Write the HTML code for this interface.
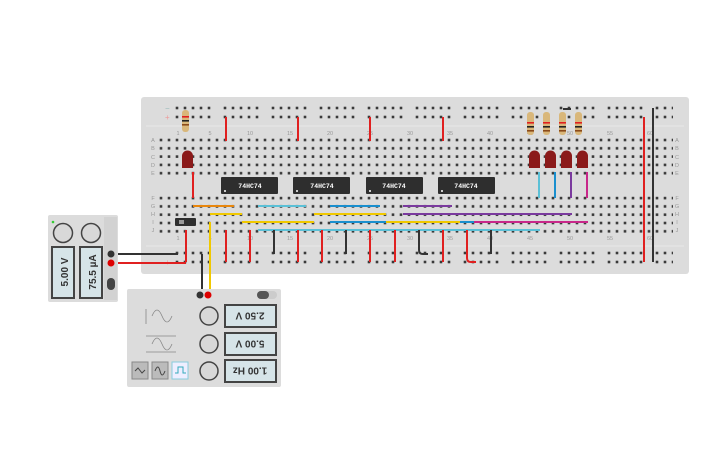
<!DOCTYPE html>
<html><head><meta charset="utf-8"><style>
html,body{margin:0;padding:0;background:#fff;width:725px;height:453px;overflow:hidden}
svg{display:block;font-family:"Liberation Sans",sans-serif}
</style></head><body>
<svg width="725" height="453" viewBox="0 0 725 453" xmlns="http://www.w3.org/2000/svg">
<defs>
<pattern id="hp" x="157" y="136" width="8" height="8.3" patternUnits="userSpaceOnUse"><rect x="2.7" y="2.7" width="2.6" height="2.6" fill="#3a3a3a"/></pattern>
<pattern id="rp" x="173" y="106" width="48" height="9" patternUnits="userSpaceOnUse">
<rect x="2.7" y="0.7" width="2.6" height="2.6" fill="#3a3a3a"/><rect x="10.7" y="0.7" width="2.6" height="2.6" fill="#3a3a3a"/><rect x="18.7" y="0.7" width="2.6" height="2.6" fill="#3a3a3a"/><rect x="26.7" y="0.7" width="2.6" height="2.6" fill="#3a3a3a"/><rect x="34.7" y="0.7" width="2.6" height="2.6" fill="#3a3a3a"/></pattern>
</defs>
<!-- breadboard -->
<rect x="141" y="97" width="548" height="177" rx="3" fill="#dcdcdc"/>
<line x1="146" y1="126" x2="684" y2="126" stroke="#e8e8e8"/>
<line x1="146" y1="246" x2="684" y2="246" stroke="#e8e8e8"/>
<!-- rails -->
<rect x="173" y="106" width="500" height="13" fill="url(#rp)"/>
<g transform="translate(0,145)"><rect x="173" y="106" width="500" height="13" fill="url(#rp)"/></g>
<text x="165" y="111" font-size="8" fill="#9bb">−</text><text x="165" y="120" font-size="8" fill="#e99">+</text>
<text x="165" y="256" font-size="8" fill="#9bb">−</text><text x="165" y="265" font-size="8" fill="#e99">+</text>
<!-- terminal strips -->
<rect x="157" y="136" width="516" height="41.5" fill="url(#hp)"/>
<rect x="157" y="194" width="516" height="41.5" fill="url(#hp)"/>
<g font-size="5.5" fill="#999" text-anchor="middle">
<text x="178" y="135">1</text><text x="210" y="135">5</text><text x="250" y="135">10</text><text x="290" y="135">15</text><text x="330" y="135">20</text><text x="370" y="135">25</text><text x="410" y="135">30</text><text x="450" y="135">35</text><text x="490" y="135">40</text><text x="530" y="135">45</text><text x="570" y="135">50</text><text x="610" y="135">55</text><text x="650" y="135">60</text>
<text x="178" y="240">1</text><text x="210" y="240">5</text><text x="250" y="240">10</text><text x="290" y="240">15</text><text x="330" y="240">20</text><text x="370" y="240">25</text><text x="410" y="240">30</text><text x="450" y="240">35</text><text x="490" y="240">40</text><text x="530" y="240">45</text><text x="570" y="240">50</text><text x="610" y="240">55</text><text x="650" y="240">60</text>
<text x="153" y="142">A</text><text x="153" y="150">B</text><text x="153" y="159">C</text><text x="153" y="167">D</text><text x="153" y="175">E</text>
<text x="153" y="200">F</text><text x="153" y="208">G</text><text x="153" y="216">H</text><text x="153" y="224">I</text><text x="153" y="232">J</text>
<text x="677" y="142">A</text><text x="677" y="150">B</text><text x="677" y="159">C</text><text x="677" y="167">D</text><text x="677" y="175">E</text>
<text x="677" y="200">F</text><text x="677" y="208">G</text><text x="677" y="216">H</text><text x="677" y="224">I</text><text x="677" y="232">J</text>
</g>
<!-- ICs -->
<g fill="#2e2e2e">
<rect x="221" y="177" width="57" height="17" rx="1"/><rect x="293" y="177" width="57" height="17" rx="1"/><rect x="366" y="177" width="57" height="17" rx="1"/><rect x="438" y="177" width="57" height="17" rx="1"/>
</g>
<g font-size="6.5" fill="#fff" font-family="Liberation Mono,monospace" font-weight="bold" text-anchor="middle">
<text x="250" y="188">74HC74</text><text x="322" y="188">74HC74</text><text x="394" y="188">74HC74</text><text x="466" y="188">74HC74</text></g>
<g fill="#fff"><circle cx="225" cy="191" r="1"/><circle cx="297" cy="191" r="1"/><circle cx="370" cy="191" r="1"/><circle cx="442" cy="191" r="1"/></g>
<!-- wires -->
<g stroke-width="2" fill="none">
<line x1="193" y1="206" x2="234" y2="206" stroke="#e8860c"/>
<line x1="258" y1="206" x2="306" y2="206" stroke="#5bc0d6"/>
<line x1="330" y1="206" x2="380" y2="206" stroke="#1a8fce"/>
<line x1="403" y1="206" x2="452" y2="206" stroke="#7a3a9e"/>
<line x1="210" y1="214" x2="242" y2="214" stroke="#f0c800"/>
<line x1="314" y1="214" x2="386" y2="214" stroke="#f0c800"/>
<line x1="403" y1="214" x2="572" y2="214" stroke="#7a3a9e"/>
<line x1="242" y1="222" x2="314" y2="222" stroke="#f0c800"/>
<line x1="330" y1="222" x2="386" y2="222" stroke="#1a8fce"/>
<line x1="386" y1="222" x2="460" y2="222" stroke="#f0c800"/>
<line x1="460" y1="222" x2="474" y2="222" stroke="#1a8fce"/>
<line x1="474" y1="222" x2="588" y2="222" stroke="#c8288a"/>
<line x1="258" y1="230" x2="540" y2="230" stroke="#5bc0d6"/>
<line x1="539" y1="172" x2="539" y2="198" stroke="#5bc0d6"/>
<line x1="555" y1="172" x2="555" y2="198" stroke="#1a8fce"/>
<line x1="571" y1="172" x2="571" y2="198" stroke="#7a3a9e"/>
<line x1="587" y1="172" x2="587" y2="198" stroke="#c8288a"/>
<line x1="193" y1="172" x2="193" y2="198" stroke="#e02020"/>
<g stroke="#e02020">
<line x1="226" y1="117" x2="226" y2="141"/><line x1="298" y1="117" x2="298" y2="141"/><line x1="370" y1="117" x2="370" y2="141"/><line x1="443" y1="117" x2="443" y2="141"/>
<line x1="186" y1="230" x2="186" y2="262"/><line x1="226" y1="230" x2="226" y2="262"/><line x1="250" y1="230" x2="250" y2="262"/><line x1="298" y1="230" x2="298" y2="262"/><line x1="322" y1="230" x2="322" y2="262"/><line x1="370" y1="230" x2="370" y2="262"/><line x1="395" y1="230" x2="395" y2="262"/><line x1="443" y1="230" x2="443" y2="262"/>
<path d="M467 230 V258 q0 4 4 4 H476"/>
<line x1="644" y1="117" x2="644" y2="262"/>
<line x1="111" y1="263" x2="186" y2="263"/>
</g>
<g stroke="#333">
<line x1="274" y1="230" x2="274" y2="254"/><line x1="346" y1="230" x2="346" y2="254"/><path d="M419 230 V250 q0 4 4 4 H428"/><line x1="491" y1="230" x2="491" y2="254"/>
<line x1="653" y1="108" x2="653" y2="262"/>
<path d="M563 109 H571"/>
<line x1="111" y1="254" x2="178" y2="254"/>
<line x1="202" y1="254" x2="202" y2="295"/>
</g>
<line x1="210" y1="222" x2="210" y2="295" stroke="#f0c800"/>
</g>
<!-- switch -->
<rect x="175" y="218" width="21" height="8" rx="1" fill="#2e2e2e"/><rect x="179" y="220" width="5" height="4" fill="#999"/>
<!-- resistors -->
<g>
<rect x="182" y="110" width="7" height="22" rx="3" fill="#d9b77a"/>
<rect x="182" y="116" width="7" height="1.6" fill="#e02020"/><rect x="182" y="120" width="7" height="1.6" fill="#222"/><rect x="182" y="124" width="7" height="1.6" fill="#8a4a1a"/>
<rect x="527" y="112" width="7" height="23" rx="3" fill="#d9b77a"/><rect x="527" y="122" width="7" height="1.6" fill="#e02020"/><rect x="527" y="126" width="7" height="1.6" fill="#222"/><rect x="527" y="130" width="7" height="1.6" fill="#8a4a1a"/>
<rect x="543" y="112" width="7" height="23" rx="3" fill="#d9b77a"/><rect x="543" y="122" width="7" height="1.6" fill="#e02020"/><rect x="543" y="126" width="7" height="1.6" fill="#222"/><rect x="543" y="130" width="7" height="1.6" fill="#8a4a1a"/>
<rect x="559" y="112" width="7" height="23" rx="3" fill="#d9b77a"/><rect x="559" y="122" width="7" height="1.6" fill="#e02020"/><rect x="559" y="126" width="7" height="1.6" fill="#222"/><rect x="559" y="130" width="7" height="1.6" fill="#8a4a1a"/>
<rect x="575" y="112" width="7" height="23" rx="3" fill="#d9b77a"/><rect x="575" y="122" width="7" height="1.6" fill="#e02020"/><rect x="575" y="126" width="7" height="1.6" fill="#222"/><rect x="575" y="130" width="7" height="1.6" fill="#8a4a1a"/>
</g>
<!-- LEDs -->
<g fill="#8b1a1a">
<path d="M182 168 V156 a5.5 5.5 0 0 1 11 0 V168 Z"/>
<path d="M529 168 V156 a5.5 5.5 0 0 1 11 0 V168 Z"/><path d="M545 168 V156 a5.5 5.5 0 0 1 11 0 V168 Z"/><path d="M561 168 V156 a5.5 5.5 0 0 1 11 0 V168 Z"/><path d="M577 168 V156 a5.5 5.5 0 0 1 11 0 V168 Z"/>
</g>
<!-- power supply -->
<rect x="48" y="215" width="70" height="87" rx="2" fill="#dcdcdc"/>
<rect x="104" y="217" width="13" height="83" fill="#d2d2d2"/>
<circle cx="63" cy="233" r="9.5" fill="#d8d8d8" stroke="#444" stroke-width="1.5"/>
<circle cx="91" cy="233" r="9.5" fill="#d8d8d8" stroke="#444" stroke-width="1.5"/>
<circle cx="53" cy="222" r="1.3" fill="#3c3"/>
<rect x="52" y="247" width="22" height="51" fill="#d6e4e8" stroke="#444" stroke-width="2"/>
<rect x="80" y="247" width="22" height="51" fill="#d6e4e8" stroke="#444" stroke-width="2"/>
<text transform="translate(68,272) rotate(-90)" font-size="10" font-weight="bold" fill="#333" text-anchor="middle">5.00 V</text>
<text transform="translate(96,272) rotate(-90)" font-size="10" font-weight="bold" fill="#333" text-anchor="middle">75.5 µA</text>
<rect x="107" y="278" width="8" height="12" rx="4" fill="#444"/>
<circle cx="111" cy="254" r="3.5" fill="#333"/><circle cx="111" cy="263" r="3.5" fill="#d00"/>
<!-- function generator -->
<rect x="127" y="289" width="154" height="98" rx="2" fill="#dcdcdc"/>
<circle cx="200" cy="295" r="3.5" fill="#333"/><circle cx="208" cy="295" r="3.5" fill="#d00"/>
<rect x="257" y="291" width="20" height="8" rx="4" fill="#ccc"/><rect x="257" y="291" width="12" height="8" rx="4" fill="#555"/>
<g fill="none" stroke="#888" stroke-width="0.8">
<path d="M152 316 q5 -12 10 0 t10 0"/><line x1="146" y1="309" x2="146" y2="324"/>
<path d="M152 344 q5 -12 10 0 t10 0"/><line x1="146" y1="336" x2="176" y2="336"/><line x1="146" y1="352" x2="176" y2="352"/>
</g>
<g stroke="#444" stroke-width="1.5" fill="#d8d8d8"><circle cx="209" cy="316" r="9"/><circle cx="209" cy="344" r="9"/><circle cx="209" cy="371" r="9"/></g>
<g fill="#d6e4e8" stroke="#444" stroke-width="2"><rect x="225" y="305" width="51" height="22"/><rect x="225" y="333" width="51" height="22"/><rect x="225" y="360" width="51" height="22"/></g>
<g font-size="10" font-weight="bold" fill="#333" text-anchor="middle">
<text transform="translate(250,316) rotate(180)" dy="3.5">2.50 V</text>
<text transform="translate(250,344) rotate(180)" dy="3.5">5.00 V</text>
<text transform="translate(250,371) rotate(180)" dy="3.5">1.00 Hz</text></g>
<rect x="132" y="362" width="16" height="17" fill="#bbb" stroke="#888"/>
<rect x="152" y="362" width="16" height="17" fill="#bbb" stroke="#888"/>
<rect x="172" y="362" width="16" height="17" fill="#eef" stroke="#8cd"/>
<g fill="none" stroke="#444" stroke-width="1"><path d="M135 371 l3 -3 l4 5 l3 -3"/><path d="M155 371 q3 -8 5 0 t5 0"/><path d="M175 373 h3 v-6 h5 v6 h3" stroke="#3ab"/></g>
</svg>
</body></html>
